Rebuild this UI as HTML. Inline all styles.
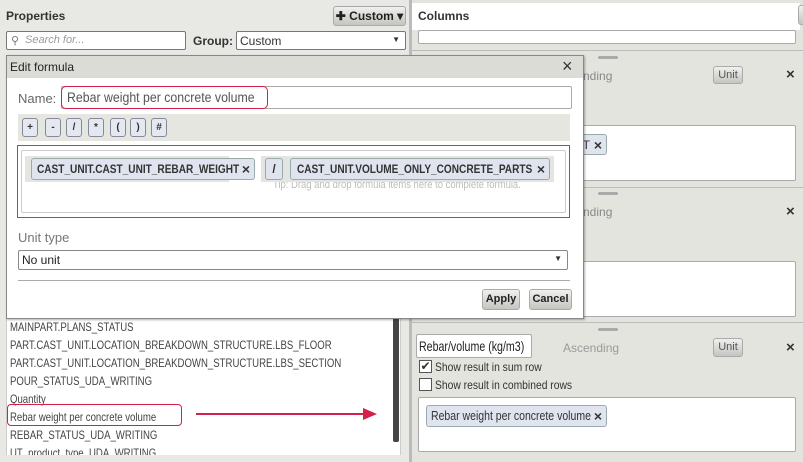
<!DOCTYPE html>
<html><head><meta charset="utf-8"><style>
*{box-sizing:border-box;margin:0;padding:0}
body{width:803px;height:462px;overflow:hidden;background:#e4e4df;font-family:"Liberation Sans",sans-serif;font-size:12px;color:#333;position:relative}
.a{position:absolute;white-space:nowrap}
.n{display:inline-block;transform:scaleX(.86);transform-origin:left center}
.btn{position:absolute;background:linear-gradient(#f0f0ee,#c4c4c0);border:1px solid #aaa;border-radius:3px;font-weight:bold;text-align:center;font-size:11px;color:#222;white-space:nowrap}
.box{position:absolute;background:#fff;border:1px solid #999;border-radius:2px}
.chip{position:absolute;background:#dfe4ee;border:1px solid #9aa;border-radius:3px;font-weight:bold;font-size:12px;color:#333;padding:3px 4px;white-space:nowrap;overflow:hidden}
.cx{position:absolute;right:4px;top:3px;font-weight:bold;font-size:14px;line-height:14px}
.op{position:absolute;top:118px;width:16px;height:19px;background:#e4e8f0;border:1px solid #889;border-radius:3px;font-weight:bold;font-size:10px;text-align:center;line-height:17px}
.li{position:absolute;left:10px;font-size:12px;color:#444;white-space:nowrap;transform:scaleX(.8);transform-origin:left}
.handle{position:absolute;left:598px;width:20px;height:3px;background:#aaa;border-radius:2px}
.x{position:absolute;font-weight:bold;font-size:15px;line-height:14px}
</style></head><body>
<div class="a" style="left:0;top:0;width:409px;height:462px;background:#e8e8e4"></div>
<div class="a" style="left:6px;top:9px;font-weight:bold;font-size:12px">Properties</div>
<div class="btn" style="left:333px;top:6px;width:73px;height:20px;font-size:12px;line-height:18px">✚ Custom ▾</div>
<div class="box" style="left:6px;top:31px;width:180px;height:19px;border-color:#777"><span style="position:absolute;left:4px;top:2px;font-size:11px;color:#777">⚲</span><span style="position:absolute;left:18px;top:2px;font-style:italic;color:#999;font-size:11px">Search for...</span></div>
<div class="a" style="left:193px;top:34px;font-weight:bold">Group:</div>
<div class="box" style="left:236px;top:31px;width:170px;height:19px;border-color:#777"><span style="position:absolute;left:3px;top:2px;font-size:12px">Custom</span><span style="position:absolute;right:5px;top:3px;font-size:8px">▼</span></div>
<div class="a" style="left:6px;top:318px;width:395px;height:138px;background:#fff;border:1px solid #ccc"></div>
<div class="a" style="left:393px;top:318px;width:6px;height:124px;background:#444;border-radius:2px"></div>
<div class="li" style="top:320px">MAINPART.PLANS_STATUS</div>
<div class="li" style="top:338px">PART.CAST_UNIT.LOCATION_BREAKDOWN_STRUCTURE.LBS_FLOOR</div>
<div class="li" style="top:356px">PART.CAST_UNIT.LOCATION_BREAKDOWN_STRUCTURE.LBS_SECTION</div>
<div class="li" style="top:374px">POUR_STATUS_UDA_WRITING</div>
<div class="li" style="top:392px">Quantity</div>
<div class="li" style="top:410px">Rebar weight per concrete volume</div>
<div class="a" style="left:7px;top:404px;width:175px;height:22px;border:1px solid #d4204a;border-radius:4px"></div>
<div class="li" style="top:428px">REBAR_STATUS_UDA_WRITING</div>
<div class="li" style="top:446px">UT_product_type_UDA_WRITING</div>
<div class="a" style="left:0;top:455px;width:409px;height:7px;background:#e8e8e4"></div>
<svg class="a" style="left:195px;top:407px" width="185" height="14"><line x1="1" y1="7" x2="172" y2="7" stroke="#d4204a" stroke-width="2"/><polygon points="168,1 182,7 168,13" fill="#d4204a"/></svg>
<div class="a" style="left:409px;top:0;width:3px;height:462px;background:#bbb"></div>
<div class="a" style="left:412px;top:0;width:391px;height:462px;background:#e4e4df"></div>
<div class="a" style="left:412px;top:3px;width:388px;height:27px;background:#fff"></div>
<div class="a" style="left:418px;top:9px;font-weight:bold">Columns</div>
<div class="btn" style="left:798px;top:5px;width:10px;height:20px"></div>
<div class="box" style="left:418px;top:30px;width:378px;height:14px;border-color:#aaa"></div>
<div class="a" style="left:412px;top:50px;width:391px;height:1px;background:#bbb"></div>
<div class="handle" style="top:56px"></div>
<div class="a" style="left:583px;top:69px;color:#888;font-size:12px">nding</div>
<div class="btn" style="left:713px;top:66px;width:30px;height:18px;font-weight:normal;color:#555;line-height:16px">Unit</div>
<div class="x" style="left:786px;top:68px">×</div>
<div class="box" style="left:418px;top:125px;width:378px;height:56px;border-color:#aaa"></div>
<div class="chip" style="left:560px;top:134px;width:47px;height:21px;font-weight:normal"><span class="cx">×</span><span style="position:absolute;right:16px;top:3px">HT</span></div>
<div class="a" style="left:412px;top:187px;width:391px;height:1px;background:#bbb"></div>
<div class="handle" style="top:192px"></div>
<div class="a" style="left:583px;top:205px;color:#888;font-size:12px">nding</div>
<div class="x" style="left:786px;top:205px">×</div>
<div class="box" style="left:418px;top:261px;width:378px;height:56px;border-color:#aaa"></div>
<div class="a" style="left:412px;top:322px;width:391px;height:1px;background:#bbb"></div>
<div class="handle" style="top:328px"></div>
<div class="box" style="left:416px;top:334px;width:116px;height:24px;border-color:#aaa"><span style="position:absolute;left:2px;top:3px;font-size:14px;color:#222;white-space:nowrap;transform:scaleX(.76);transform-origin:left;display:inline-block">Rebar/volume (kg/m3)</span></div>
<div class="a" style="left:563px;top:341px;color:#999;font-size:12px">Ascending</div>
<div class="btn" style="left:713px;top:338px;width:30px;height:19px;font-weight:normal;color:#555;line-height:17px">Unit</div>
<div class="x" style="left:786px;top:341px">×</div>
<div class="a" style="left:419px;top:360px;width:13px;height:13px;border:1px solid #555;background:#fff;font-size:12px;line-height:11px;text-align:center">✔</div>
<div class="a" style="left:435px;top:360px;font-size:12px"><span class="n">Show result in sum row</span></div>
<div class="a" style="left:419px;top:378px;width:13px;height:13px;border:1px solid #555;background:#fff"></div>
<div class="a" style="left:435px;top:378px;font-size:12px"><span class="n">Show result in combined rows</span></div>
<div class="box" style="left:418px;top:397px;width:378px;height:55px;border-color:#aaa"></div>
<div class="chip" style="left:426px;top:405px;width:181px;height:22px;font-weight:normal;font-size:12.5px;padding:3px 4px"><span class="n" style="transform:scaleX(.84)">Rebar weight per concrete volume</span><span class="cx">×</span></div>
<div class="a" style="left:6px;top:55px;width:578px;height:264px;background:#fff;border:1px solid #888;box-shadow:1px 1px 2px rgba(0,0,0,.3)"></div>
<div class="a" style="left:7px;top:56px;width:576px;height:22px;background:#dcdcd7"></div>
<div class="a" style="left:10px;top:60px;font-size:12px;color:#222">Edit formula</div>
<div class="a" style="left:562px;top:56px;font-size:18px;color:#333">×</div>
<div class="a" style="left:18px;top:91px;font-size:13px;color:#666">Name:</div>
<div class="box" style="left:61px;top:86px;width:511px;height:23px;border-color:#aaa"></div>
<div class="a" style="left:61px;top:86px;width:207px;height:23px;border:1px solid #d4204a;border-radius:5px"></div>
<div class="a" style="left:67px;top:89px;font-size:14px;color:#555"><span class="n" style="transform:scaleX(.88)">Rebar weight per concrete volume</span></div>
<div class="a" style="left:18px;top:114px;width:552px;height:27px;background:#e6e6e0"></div>
<div class="op" style="left:22px">+</div><div class="op" style="left:45px">-</div><div class="op" style="left:66px">/</div><div class="op" style="left:88px">*</div><div class="op" style="left:110px">(</div><div class="op" style="left:130px">)</div><div class="op" style="left:151px">#</div>
<div class="a" style="left:17px;top:145px;width:553px;height:73px;border:1px solid #666"></div>
<div class="a" style="left:21px;top:150px;width:545px;height:63px;border:1px solid #ccc;border-radius:2px"></div>
<div class="a" style="left:273px;top:179px;font-size:11px;color:#bbb"><span class="n">Tip: Drag and drop formula items here to complete formula.</span></div>
<div class="a" style="left:25px;top:156px;width:204px;height:26px;background:#e4e4e0"></div>
<div class="chip" style="left:31px;top:158px;width:224px;height:22px;padding-left:5px"><span class="n" style="transform:scaleX(.84)">CAST_UNIT.CAST_UNIT_REBAR_WEIGHT</span><span class="cx">×</span></div>
<div class="a" style="left:261px;top:156px;width:26px;height:26px;background:#e4e4e0"></div>
<div class="chip" style="left:265px;top:158px;width:18px;height:22px;text-align:center;padding:3px 0">/</div>
<div class="a" style="left:287px;top:156px;width:267px;height:26px;background:#e4e4e0"></div>
<div class="chip" style="left:290px;top:158px;width:260px;height:22px;padding-left:6px"><span class="n" style="transform:scaleX(.84)">CAST_UNIT.VOLUME_ONLY_CONCRETE_PARTS</span><span class="cx">×</span></div>
<div class="a" style="left:18px;top:230px;font-size:13px;color:#777">Unit type</div>
<div class="box" style="left:18px;top:250px;width:550px;height:20px;border-color:#888"><span style="position:absolute;left:3px;top:2px;font-size:12px;color:#222">No unit</span><span style="position:absolute;right:5px;top:3px;font-size:8px">▼</span></div>
<div class="a" style="left:18px;top:280px;width:552px;height:1px;background:#aaa"></div>
<div class="btn" style="left:482px;top:289px;width:38px;height:21px;line-height:19px">Apply</div>
<div class="btn" style="left:529px;top:289px;width:43px;height:21px;line-height:19px">Cancel</div>
</body></html>
